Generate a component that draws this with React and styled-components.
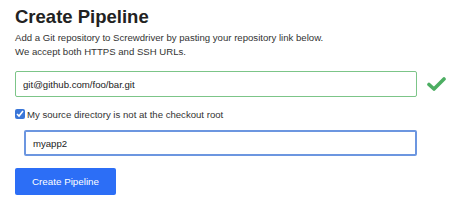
import React, { useState } from 'react';
import styled, { createGlobalStyle } from 'styled-components';

const Global = createGlobalStyle`
  body {
    margin: 0;
    background: #fff;
    font-family: "Liberation Sans", Arial, sans-serif;
    color: #222;
  }
`;

const Page = styled.div`
  padding: 3px 15px 0 15px;
`;

const Title = styled.h1`
  margin: 0;
  font-size: 18.5px;
  font-weight: 700;
  line-height: 28px;
  color: #222;
`;

const Intro = styled.p`
  margin: 0;
  font-size: 9.6px;
  line-height: 14px;
  color: #333;
`;

const Row = styled.div`
  display: flex;
  align-items: center;
  gap: 10px;
  margin-top: ${p => p.top || 0}px;
  padding-left: ${p => p.indent || 0}px;
`;

const Field = styled.input`
  box-sizing: border-box;
  width: ${p => p.width}px;
  height: 26px;
  padding: 0 7px;
  border: ${p => p.valid ? '1px solid #7cc588' : '2px solid #6c96e0'};
  border-radius: 2px;
  font-family: inherit;
  font-size: 9.6px;
  color: #222;
  outline: none;
`;

const CheckRow = styled.label`
  display: flex;
  align-items: center;
  gap: 2px;
  height: 12px;
  margin-top: 11px;
  font-size: 9.6px;
  color: #333;
`;

const Box = styled.input`
  margin: 0;
  width: 10px;
  height: 10px;
  accent-color: #3a76d8;
`;

const Button = styled.button`
  display: block;
  margin-top: 12px;
  width: 101px;
  height: 27px;
  border: none;
  border-radius: 2px;
  background: #2c6ef6;
  color: #fff;
  font-family: inherit;
  font-size: 9.8px;
`;

const Check = () => (
  <svg width="19" height="14" viewBox="0 0 19 14">
    <path d="M2 7.5 L7 12 L17 2" fill="none" stroke="#4cae62" strokeWidth="3.6" strokeLinecap="round" strokeLinejoin="round" />
  </svg>
);

export default function App() {
  const [sub, setSub] = useState(true);
  return (
    <Page>
      <Global />
      <Title>Create Pipeline</Title>
      <Intro>
        Add a Git repository to Screwdriver by pasting your repository link below.<br />
        We accept both HTTPS and SSH URLs.
      </Intro>
      <Row top={12}>
        <Field width={402} valid defaultValue="git@github.com/foo/bar.git" />
        <Check />
      </Row>
      <CheckRow>
        <Box type="checkbox" checked={sub} onChange={() => setSub(!sub)} />
        My source directory is not at the checkout root
      </CheckRow>
      <Row top={10} indent={9}>
        <Field width={393} defaultValue="myapp2" />
      </Row>
      <Button>Create Pipeline</Button>
    </Page>
  );
}
